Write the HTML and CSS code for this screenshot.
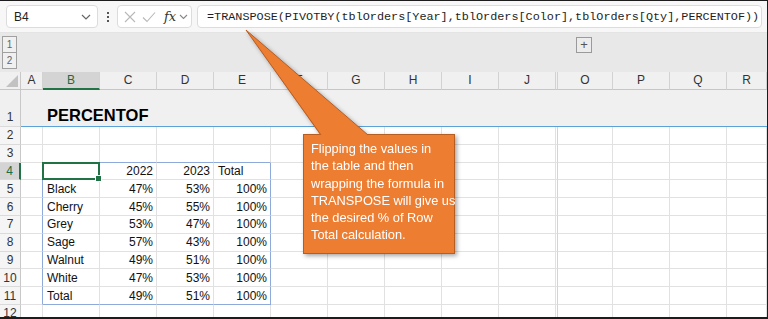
FILE: index.html
```html
<!DOCTYPE html>
<html lang="en">
<head>
    <meta charset="UTF-8">
    <title>PERCENTOF - Excel</title>
    <link rel="stylesheet" href="styles.css">
</head>
<body>
    <div class="app">
        <div class="formula-bar">
            <div class="name-box">
                <span>B4</span>
                <svg class="chev" width="10" height="6" viewBox="0 0 10 6"><path d="M1 1l4 4 4-4" fill="none" stroke="#666" stroke-width="1.2"/></svg>
            </div>
            <div class="kebab"><i></i><i></i><i></i></div>
            <div class="fx-group">
                <svg width="12" height="12" viewBox="0 0 12 12"><path d="M1 1l10 10M11 1L1 11" stroke="#b8b8b8" stroke-width="1.1" fill="none"/></svg>
                <svg width="14" height="12" viewBox="0 0 14 12"><path d="M1 6.5l4 4L13 1.5" stroke="#b8b8b8" stroke-width="1.1" fill="none"/></svg>
                <span class="fx">fx</span>
                <svg width="9" height="6" viewBox="0 0 9 6"><path d="M1 1l3.5 3.5L8 1" fill="none" stroke="#888" stroke-width="1.1"/></svg>
            </div>
            <div class="formula">=TRANSPOSE(PIVOTBY(tblOrders[Year],tblOrders[Color],tblOrders[Qty],PERCENTOF))</div>
        </div>

        <div class="outline-band">
            <div class="levels">
                <span class="level">1</span>
                <span class="level">2</span>
            </div>
            <span class="expand">+</span>
        </div>

        <div class="sheet" id="sheet"></div>

        <div class="callout">
            <svg class="pointer" width="110" height="110" viewBox="0 0 110 110">
                <polygon points="1,1 76,107 124,107" fill="#ed7d31"/>
                <polyline points="76,106 1,1 123,106" fill="none" stroke="#b65d22" stroke-width="1"/>
            </svg>
            <div class="callout-text">
                Flipping the values in<br>
                the table and then<br>
                wrapping the formula in<br>
                TRANSPOSE will give us<br>
                the desired % of Row<br>
                Total calculation.
            </div>
        </div>
    </div>

    <script>
        const cols = ['A', 'B', 'C', 'D', 'E', 'F', 'G', 'H', 'I', 'J', '', 'O', 'P', 'Q', 'R'];
        const values = {
            1: ['', 'PERCENTOF'],
            4: ['', '', '2022', '2023', 'Total'],
            5: ['', 'Black', '47%', '53%', '100%'],
            6: ['', 'Cherry', '45%', '55%', '100%'],
            7: ['', 'Grey', '53%', '47%', '100%'],
            8: ['', 'Sage', '57%', '43%', '100%'],
            9: ['', 'Walnut', '49%', '51%', '100%'],
            10: ['', 'White', '47%', '53%', '100%'],
            11: ['', 'Total', '49%', '51%', '100%']
        };

        const sheet = document.getElementById('sheet');

        function add(cls, text) {
            const d = document.createElement('div');
            d.className = cls;
            if (text) d.textContent = text;
            sheet.appendChild(d);
        }

        add('corner');
        cols.forEach(c => {
            let cls = 'col-head';
            if (c === 'B') cls += ' active';
            if (c === '') cls += ' gap';
            add(cls, c);
        });

        for (let r = 1; r <= 12; r++) {
            let head = 'row-head';
            if (r === 1) head += ' frozen';
            if (r === 4) head += ' active';
            add(head, String(r));

            cols.forEach((c, i) => {
                const v = (values[r] || [])[i] || '';
                let cls = 'cell';
                if (r === 1) cls += ' frozen';
                if (c === '') cls += ' gap';
                if (/^[\d%]+$/.test(v)) cls += ' num';
                // borde azul de la tabla B4:E11
                if (i >= 1 && i <= 4 && (r === 3 || r === 11)) cls += ' edge-b';
                if ((i === 0 || i === 4) && r >= 4 && r <= 11) cls += ' edge-r';
                if (r === 4 && c === 'B') cls += ' sel';
                if (r === 1 && c === 'B') cls += ' title';
                add(cls, v);
            });
        }
    </script>
</body>
</html>
```

FILE: styles.css
```css
/* General */
* {
    box-sizing: border-box;
}

body {
    margin: 0;
    font-family: "Liberation Sans", Arial, sans-serif;
    background: #fff;
}

.app {
    --cols: 21px 22px repeat(9, 57px) 2px 55px 57px 57px 1fr;
    position: relative;
    width: 768px;
    height: 319px;
    overflow: hidden;
    border-top: 1px solid #1c1c1c;
    border-right: 1px solid #1c1c1c;
    border-bottom: 2px solid #1c1c1c;
}

/* Barra de formulas */
.formula-bar {
    height: 32px;
    display: flex;
    align-items: center;
    padding: 0 5px 0 6px;
    background: #f7f7f7;
    border-bottom: 1px solid #e4e4e4;
}

.name-box {
    width: 92px;
    height: 23px;
    display: flex;
    align-items: center;
    justify-content: space-between;
    padding: 0 6px 0 7px;
    background: #fff;
    border: 1px solid #dcdcdc;
    border-radius: 4px;
    font-size: 12px;
    color: #222;
}

.kebab {
    width: 19px;
    display: flex;
    flex-direction: column;
    align-items: center;
    gap: 2px;
}

.kebab i {
    width: 2px;
    height: 2px;
    background: #555;
}

.fx-group {
    width: 75px;
    height: 23px;
    display: flex;
    align-items: center;
    gap: 6px;
    padding-left: 6px;
    background: #fff;
    border: 1px solid #dcdcdc;
    border-radius: 4px;
}

.fx-group .fx {
    font-family: "DejaVu Serif", "Liberation Serif", serif;
    font-style: italic;
    font-size: 13px;
    color: #333;
    margin-left: 2px;
    margin-right: -3px;
}

.formula {
    flex: 1;
    height: 23px;
    margin-left: 5px;
    padding-left: 9px;
    display: flex;
    align-items: center;
    background: #fff;
    border: 1px solid #dcdcdc;
    border-radius: 4px;
    font-family: "Liberation Mono", monospace;
    font-size: 11.8px;
    color: #1e1e1e;
    white-space: nowrap;
    overflow: hidden;
}

/* Banda de esquema */
.outline-band {
    height: 39px;
    display: grid;
    grid-template-columns: var(--cols);
    align-items: start;
    padding-top: 3px;
    background: #e8e8e8;
}

.levels {
    display: flex;
    flex-direction: column;
    margin-left: 2px;
}

.level {
    width: 15px;
    height: 17px;
    border: 1px solid #a0a0a0;
    margin-top: -1px;
    background: #f0f0f0;
    font-size: 10px;
    line-height: 15px;
    text-align: center;
    color: #666;
}

.level:first-child {
    margin-top: 0;
}

.expand {
    grid-column: 13;
    width: 16px;
    height: 16px;
    margin-top: 1px;
    margin-left: 18px;
    border: 1px solid #9a9a9a;
    background: #ececec;
    font-size: 13px;
    line-height: 13px;
    text-align: center;
    color: #555;
}

/* Hoja */
.sheet {
    display: grid;
    grid-template-columns: var(--cols);
    grid-template-rows: 18px 37px;
    grid-auto-rows: 17.8px;
    font-size: 12px;
    color: #111;
}

.corner {
    display: flex;
    align-items: flex-end;
    justify-content: flex-end;
    padding: 0 2px 2px 0;
    background: #f0f0f0;
    border-right: 1px solid #c8c8c8;
    border-bottom: 1px solid #c6c6c6;
}

.corner::after {
    content: '';
    width: 12px;
    height: 12px;
    background: #c2c2c2;
    clip-path: polygon(100% 0, 100% 100%, 0 100%);
}

.col-head {
    background: #f0f0f0;
    border-right: 1px solid #d2d2d2;
    border-bottom: 1px solid #c6c6c6;
    text-align: center;
    line-height: 17px;
    color: #333;
}

.col-head.active {
    background: #d4d4d4;
    border-bottom: 2px solid #217346;
    color: #1d6b40;
}

.row-head {
    display: flex;
    align-items: center;
    justify-content: center;
    background: #f5f5f5;
    border-right: 1px solid #c8c8c8;
    border-bottom: 1px solid #dadada;
    color: #333;
}

.row-head.frozen {
    align-items: flex-end;
    padding-bottom: 2px;
    background: #f0f0f0;
}

.row-head.active {
    background: #d4d4d4;
    border-right: 2px solid #217346;
    color: #1d6b40;
}

.cell {
    display: flex;
    align-items: center;
    padding: 0 3px 0 4px;
    border-right: 1px solid #e1e1e1;
    border-bottom: 1px solid #e1e1e1;
    white-space: nowrap;
}

.cell.num {
    justify-content: flex-end;
}

.cell.gap {
    border-right-color: #d4d4d4;
    padding: 0;
}

.cell.frozen {
    align-items: flex-end;
    padding-bottom: 1px;
    background: #f0f0f0;
    border-right: none;
    border-bottom: 1px solid #5aa2d8;
}

.cell.edge-b {
    border-bottom-color: #8eaadb;
}

.cell.edge-r {
    border-right-color: #8eaadb;
}

.cell.title {
    position: relative;
    z-index: 1;
    font-size: 16.5px;
    font-weight: bold;
    color: #000;
}

/* Celda activa */
.cell.sel {
    position: relative;
    z-index: 1;
}

.cell.sel::before {
    content: '';
    position: absolute;
    top: -1px;
    left: -1px;
    right: -1px;
    bottom: -1px;
    border: 2px solid #217346;
}

.cell.sel::after {
    content: '';
    position: absolute;
    right: -3px;
    bottom: -3px;
    width: 5px;
    height: 5px;
    background: #217346;
    border: 1px solid #fff;
}

/* Llamada naranja */
.callout {
    position: absolute;
    left: 303px;
    top: 133px;
    width: 152px;
    height: 120px;
    z-index: 5;
    background: #ed7d31;
    border: 1px solid #b65d22;
    filter: drop-shadow(2px 2px 2px rgba(0, 0, 0, 0.35));
}

.pointer {
    position: absolute;
    left: -59px;
    top: -106px;
    overflow: visible;
}

.callout-text {
    position: relative;
    padding: 5px 0 0 7px;
    font-size: 12.8px;
    line-height: 17.3px;
    color: #fff;
    white-space: nowrap;
}
```
